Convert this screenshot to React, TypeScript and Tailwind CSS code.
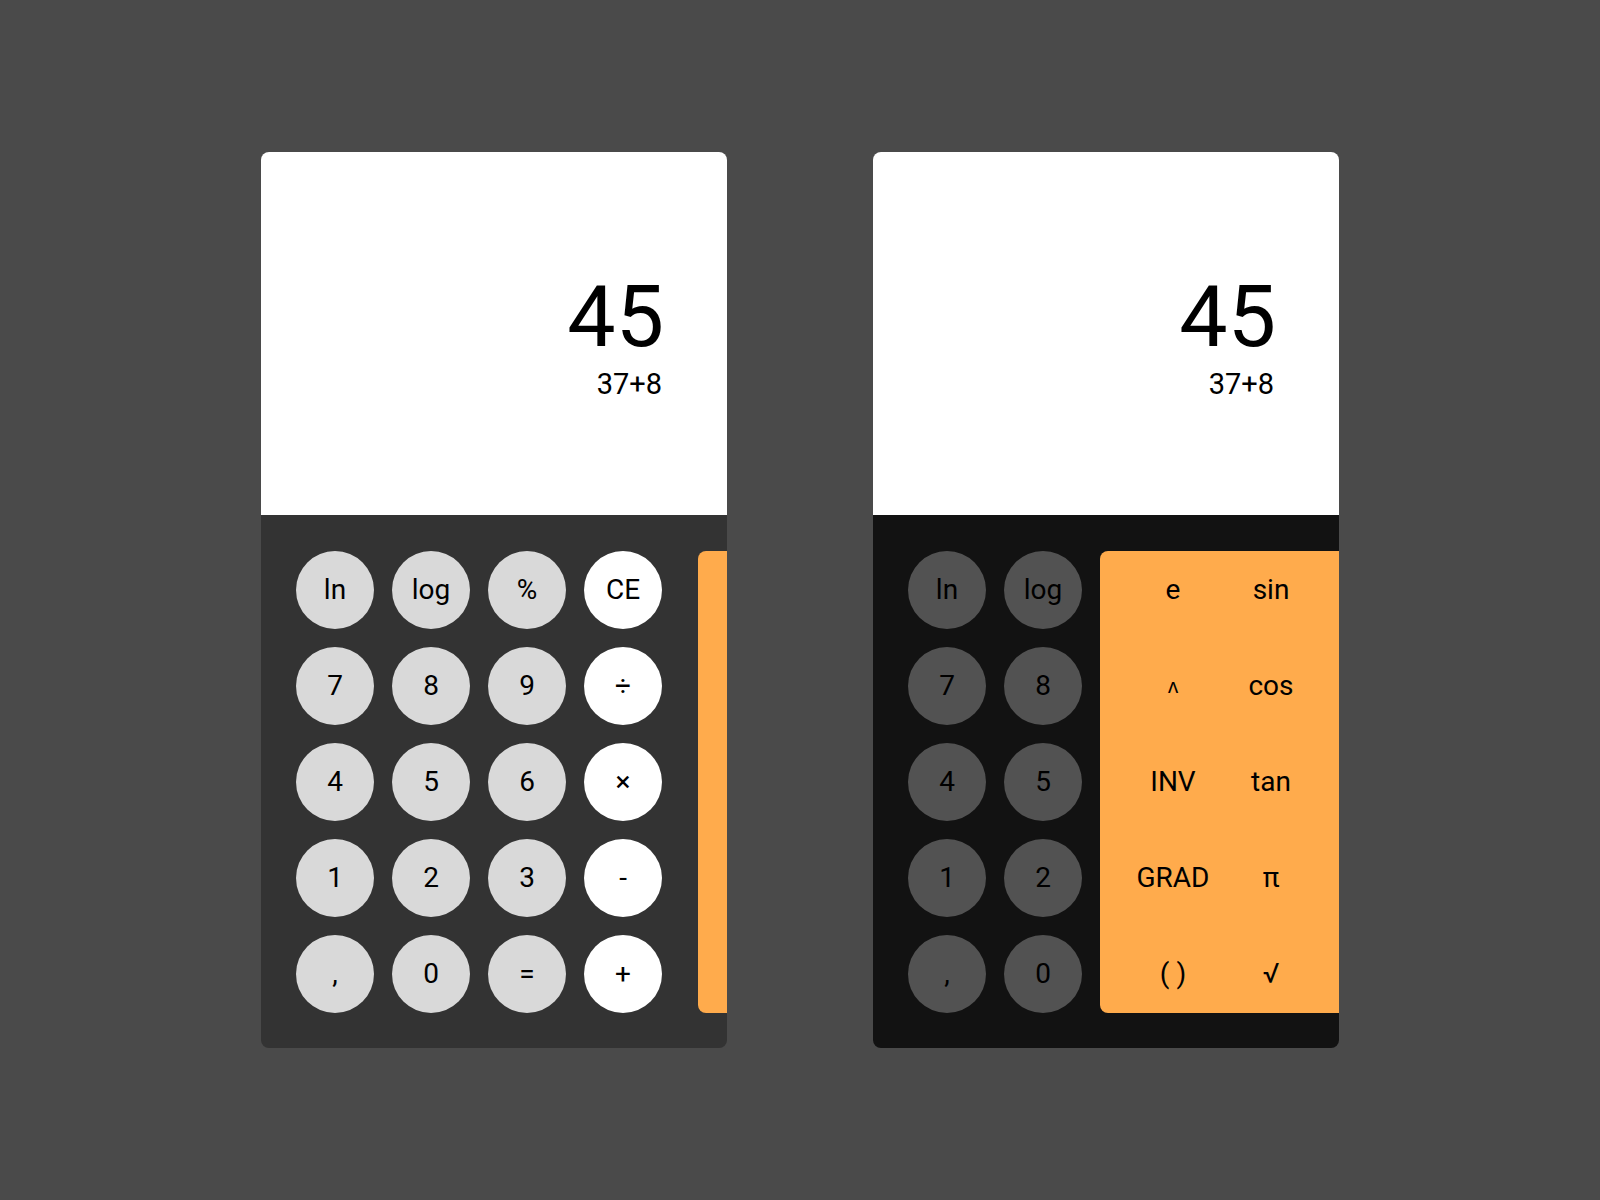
const basicKeys = [
  ["ln", "log", "%", "CE"],
  ["7", "8", "9", "÷"],
  ["4", "5", "6", "×"],
  ["1", "2", "3", "-"],
  [",", "0", "=", "+"],
];

const sciKeys = [
  ["e", "sin"],
  ["ʌ", "cos"],
  ["INV", "tan"],
  ["GRAD", "π"],
  ["( )", "√"],
];

const font = { fontFamily: "Roboto, 'Noto Sans', sans-serif" };

function Display() {
  return (
    <div className="h-[363px] bg-white flex flex-col items-end pt-[122px] pr-[65px] text-black">
      <div className="text-[86px] leading-none mr-[-2px]">45</div>
      <div className="text-[29px] leading-none mt-[10px]">37+8</div>
    </div>
  );
}

function Key({ label, tone }: { label: string; tone: string }) {
  return (
    <div
      className={`w-[78px] h-[78px] rounded-full flex items-center justify-center text-[28px] leading-none text-black ${tone}`}
    >
      {label}
    </div>
  );
}

function BasicCalculator() {
  return (
    <div className="w-[466px] rounded-[8px] overflow-hidden" style={font}>
      <Display />
      <div className="bg-[#333333] flex pt-[36px] pb-[35px] pl-[35px]">
        <div className="grid grid-cols-4 gap-[18px]">
          {basicKeys.flat().map((k, i) => (
            <Key key={i} label={k} tone={i % 4 === 3 ? "bg-white" : "bg-[#d9d9d9]"} />
          ))}
        </div>
        {/* collapsed scientific drawer */}
        <div className="ml-[36px] flex-1 bg-[#ffab4c] rounded-l-[8px]" />
      </div>
    </div>
  );
}

function ScientificCalculator() {
  return (
    <div className="w-[466px] rounded-[8px] overflow-hidden" style={font}>
      <Display />
      <div className="bg-[#121212] flex pt-[36px] pb-[35px] pl-[35px]">
        <div className="grid grid-cols-2 gap-[18px]">
          {basicKeys.flatMap((row) => row.slice(0, 2)).map((k, i) => (
            <Key key={i} label={k} tone="bg-[#525252]" />
          ))}
        </div>
        <div className="ml-[18px] flex-1 bg-[#ffab4c] rounded-l-[8px] pl-[24px] grid grid-cols-[98px_98px] gap-y-[18px]">
          {sciKeys.flat().map((k, i) => (
            <div
              key={i}
              className={`h-[78px] flex items-center justify-center leading-none text-black ${
                k === "ʌ" ? "text-[20px]" : "text-[28px]"
              }`}
            >
              {k}
            </div>
          ))}
        </div>
      </div>
    </div>
  );
}

export default function App() {
  return (
    <div className="w-full h-[1200px] bg-[#4a4a4a] flex items-center justify-center gap-[146px]">
      <BasicCalculator />
      <ScientificCalculator />
    </div>
  );
}
